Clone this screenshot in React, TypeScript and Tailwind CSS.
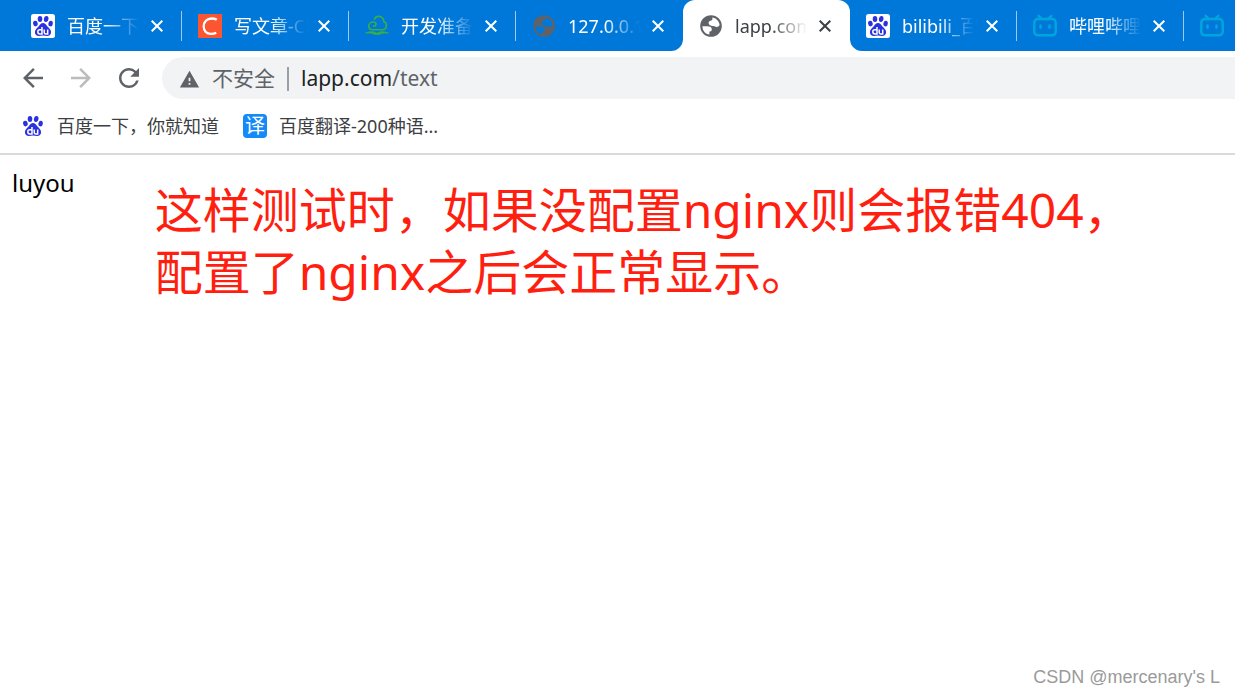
import type { ReactNode } from "react";
import { MdArrowBack, MdArrowForward, MdRefresh, MdWarning } from "react-icons/md";
import clsx from "clsx";

function BaiduPaw({ className, framed }: { className?: string; framed?: boolean }) {
  return (
    <svg viewBox="0 0 24 24" className={className} aria-hidden="true">
      {framed && <rect width="24" height="24" rx="2.5" fill="#fff" />}
      <g fill="#2a32e0">
        <ellipse cx="9" cy="5" rx="2.3" ry="3" />
        <ellipse cx="15.2" cy="5" rx="2.3" ry="3" transform="rotate(8 15.2 5)" />
        <ellipse cx="4.4" cy="9.6" rx="2.3" ry="2.8" transform="rotate(-12 4.4 9.6)" />
        <ellipse cx="19.6" cy="9.6" rx="2.2" ry="2.8" transform="rotate(8 19.6 9.6)" />
        <path d="M12 9.1c2 0 2.9 1.5 4 2.9 1.5 1.8 4.1 3.3 4.1 6 0 2.5-1.700 4-4.100 4-1.500 0-2.500-.4-4-.4s-2.500.4-4 .4c-2.400 0-4.100-1.500-4.100-4 0-2.700 2.600-4.200 4.100-6 1.100-1.400 2-2.900 4-2.900z" />
      </g>
      <g fill="none" stroke="#fff" strokeWidth="1.5">
        <path d="M11 13v6.900H8.900a1.900 1.900 0 0 1 0-4.200H11" />
        <path d="M13.200 15.400v3.200c0 .9.500 1.300 1.300 1.300h2.200v-4.500" />
      </g>
    </svg>
  );
}

function CsdnLogo() {
  return (
    <svg viewBox="0 0 24 24" className="size-6" aria-hidden="true">
      <rect width="24" height="24" fill="#fc5531" />
      <path d="M18.800 5.600C16.800 4.700 15.400 4.500 13.700 4.500C8.800 4.500 5.700 8 5.700 12.500C5.700 17 8.700 19.800 13 19.800C15.200 19.800 16.700 19.500 18.300 18.700" fill="none" stroke="#fff" strokeWidth="2.300" />
    </svg>
  );
}

function CloudBook() {
  return (
    <svg viewBox="0 0 24 24" className="size-6" fill="none" stroke="#35b045" aria-hidden="true">
      <path d="M8 12.300C9.400 12.300 11 11.600 11 10C11 8.600 9.700 8 8.400 8C6 8 3.700 9.400 3.700 12C3.700 14.500 5.500 15.700 8 15.700H17C20 15.700 21.400 13.600 21.400 11.400C21.400 9.400 20.400 8.200 18.800 7.600C18.800 4.300 16.600 2.400 13.900 2.400C11.500 2.400 9.800 3.600 9.300 5.800" strokeWidth="1.600" />
      <path d="M.6 19C4.800 17.200 9 17.300 12 19.300C15 17.300 19.200 17.200 23.400 19C19.600 18.900 16.500 18.900 14.200 20.500H9.800C7.500 18.900 4.400 18.900.6 19Z" fill="#35b045" strokeWidth=".8" />
    </svg>
  );
}

function Globe({ className }: { className?: string }) {
  return (
    <svg viewBox="0 0 24 24" className={clsx("size-6", className)} aria-hidden="true">
      <path
        fill="currentColor"
        fillRule="evenodd"
        d="M12 1.200a10.800 10.800 0 1 0 0 21.600a10.800 10.800 0 1 0 0-21.600ZM3.400 12.200H8C11.400 12.200 12.800 13.400 12.800 15.400C12.800 16.800 11.800 17.400 10.400 17.600V20.600C6.400 20 3.500 16.700 3.400 12.200ZM13.200 3.500C17 4 20.200 7 20.600 11C19.800 12.800 18.200 13.200 16.800 12.700C15.800 12.300 15 12.300 13.800 12C11.800 11.600 9.600 11 9.600 8.900C9.600 7.400 10.800 6.700 12.200 6.500C13.400 6.300 13.800 4.800 13.200 3.500Z"
      />
    </svg>
  );
}

function BiliTv() {
  return (
    <svg viewBox="0 0 24 24" className="size-6 shrink-0" fill="none" stroke="#00a5dc" strokeWidth="2.500" strokeLinecap="round" aria-hidden="true">
      <rect x="1.300" y="5.100" width="21.400" height="16.200" rx="3.500" />
      <path d="M5.600 1.800 8.500 4.600M18.400 1.800 15.500 4.600M7.500 11.500v2.200M16.500 11.500v2.200" />
    </svg>
  );
}

function CloseIcon() {
  return (
    <svg viewBox="0 0 12 12" className="size-3" fill="none" stroke="currentColor" strokeWidth="2" aria-hidden="true">
      <path d="M.7.7 11.300 11.300M11.300.7.7 11.300" />
    </svg>
  );
}

function Flare({ className }: { className: string }) {
  return (
    <svg viewBox="0 0 12 12" className={clsx("absolute bottom-0 size-3", className)} fill="#fff" aria-hidden="true">
      <path d="M12 0v12H0A12 12 0 0 0 12 0z" />
    </svg>
  );
}

type TabItem = { title: string; icon: ReactNode; active?: boolean; divider?: boolean };

const tabs: TabItem[] = [
  { title: "百度一下", icon: <BaiduPaw framed className="size-6" />, divider: true },
  { title: "写文章-C", icon: <CsdnLogo />, divider: true },
  { title: "开发准备", icon: <CloudBook />, divider: true },
  { title: "127.0.0.1", icon: <Globe className="text-[#5f6368]" /> },
  { title: "lapp.com", icon: <Globe className="text-[#5f6368]" />, active: true },
  { title: "bilibili_百", icon: <BaiduPaw framed className="size-6" />, divider: true },
  { title: "哔哩哔哩", icon: <BiliTv />, divider: true },
];

function Tab({ title, icon, active, divider }: TabItem) {
  return (
    <div
      className={clsx(
        "relative flex w-[167px] shrink-0 items-center pl-4",
        active ? "rounded-t-xl bg-white text-[#3c4043]" : "text-white"
      )}
    >
      {active && (
        <>
          <Flare className="-left-3" />
          <Flare className="-right-3 -scale-x-100" />
        </>
      )}
      <span className="shrink-0">{icon}</span>
      <span className="ml-3 w-[72px] shrink-0 overflow-hidden whitespace-nowrap mask-r-from-50% text-lg leading-6">
        {title}
      </span>
      <button type="button" aria-label="关闭" className="ml-1.5 flex size-6 items-center justify-center">
        <CloseIcon />
      </button>
      {divider && <span className="absolute right-0 h-[30px] w-px bg-[#9fc9ef]" />}
    </div>
  );
}

export default function App() {
  return (
    <div className="flex min-h-screen flex-col overflow-hidden bg-white font-['Noto_Sans','Noto_Sans_CJK_SC',sans-serif]">
      <nav className="flex h-[51px] overflow-hidden bg-[#0078d9] pl-[15px]">
        {tabs.map((tab, i) => (
          <Tab key={i} {...tab} />
        ))}
        <div className="flex items-center pl-4">
          <BiliTv />
        </div>
      </nav>

      <div className="flex items-center pt-1.5 pl-[18px] text-[#5f6368]">
        <button type="button" aria-label="后退" className="mr-[18px]">
          <MdArrowBack size={30} />
        </button>
        <button type="button" aria-label="前进" className="mr-[18px] text-[#babcbe]">
          <MdArrowForward size={30} />
        </button>
        <button type="button" aria-label="重新加载" className="mr-[18px]">
          <MdRefresh size={30} />
        </button>
        <div className="flex h-[42px] flex-1 items-center rounded-l-full bg-[#f1f3f4] pt-0.5 pl-[17px] text-[21px]">
          <MdWarning size={21} />
          <span className="ml-3">不安全</span>
          <span className="mx-3 h-6 w-0.5 bg-[#9aa0a6]" />
          <span>
            <span className="text-[#202124]">lapp.com</span>/text
          </span>
        </div>
      </div>

      <div className="flex h-14 items-center gap-6 border-b-2 border-[#dadada] pl-[21px] text-lg text-[#3c4043]">
        <a href="#baidu" className="flex items-center gap-3">
          <BaiduPaw className="size-6" />
          百度一下，你就知道
        </a>
        <a href="#fanyi" className="flex items-center gap-3">
          <span className="flex size-6 items-center justify-center rounded bg-[#1489f8] text-xl leading-6 text-white">
            译
          </span>
          百度翻译-200种语...
        </a>
      </div>

      <main className="flex flex-1 items-start pl-3">
        <p className="mt-3 text-2xl text-black">luyou</p>
        <p className="mt-6 ml-20 text-5xl leading-[62px] whitespace-nowrap text-[#ff1f10]">
          这样测试时，如果没配置nginx则会报错404，
          <br />
          配置了nginx之后会正常显示。
        </p>
      </main>

      <footer className="pr-[15px] pb-2 text-right font-['Liberation_Sans',sans-serif] text-lg leading-6 text-[#9a9a9a]">
        CSDN @mercenary's L
      </footer>
    </div>
  );
}
